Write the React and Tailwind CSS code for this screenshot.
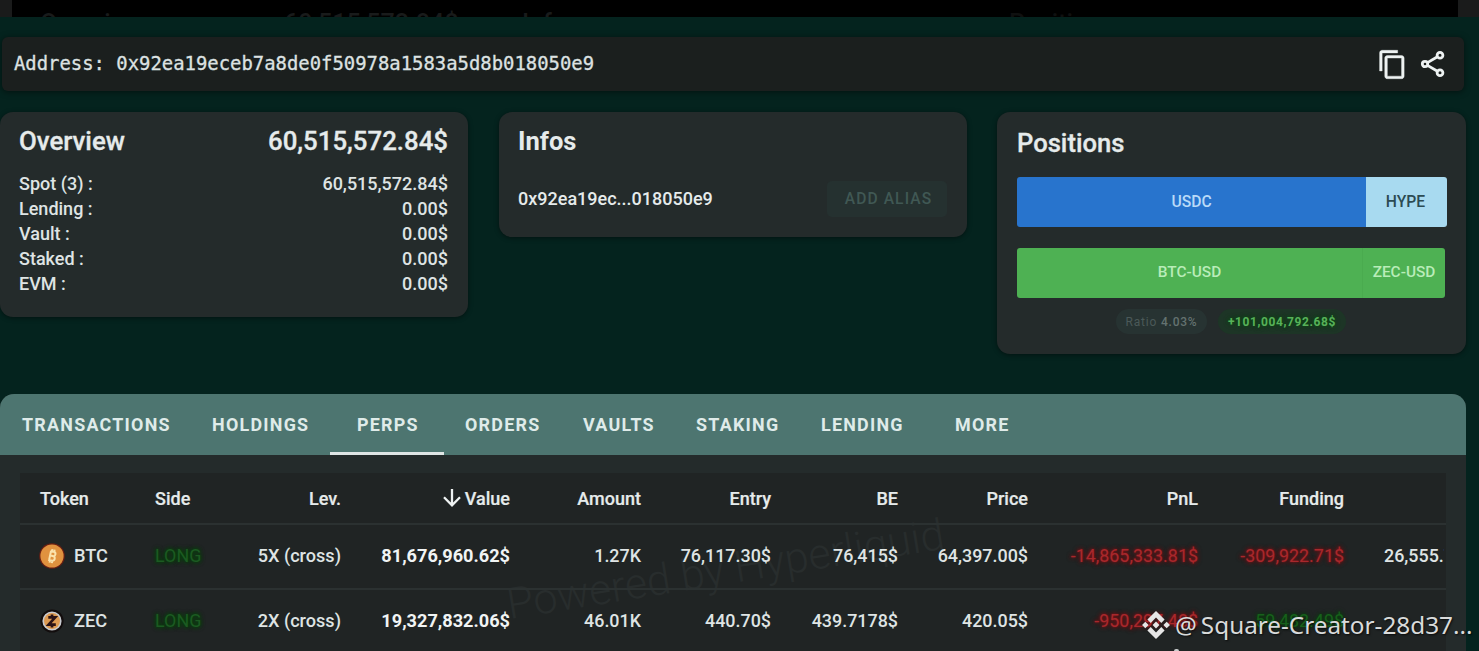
import React from 'react';

const ghostLabels = [
  { text: 'Overview', cls: 'left-[40px]' },
  { text: '60,515,572.84$', cls: 'left-[284px]' },
  { text: 'Infos', cls: 'left-[522px]' },
  { text: 'Positions', cls: 'left-[1009px] opacity-60' },
];

const overview = [
  ['Spot (3) :', '60,515,572.84$'],
  ['Lending :', '0.00$'],
  ['Vault :', '0.00$'],
  ['Staked :', '0.00$'],
  ['EVM :', '0.00$'],
];

const tabs = [
  { name: 'TRANSACTIONS', cls: 'w-[191px] pl-[22px]' },
  { name: 'HOLDINGS', cls: 'w-[139px] pl-[21px]' },
  { name: 'PERPS', cls: 'w-[114px] pl-[27px]', active: true },
  { name: 'ORDERS', cls: 'w-[118px] pl-[21px]' },
  { name: 'VAULTS', cls: 'w-[112px] pl-[21px]' },
  { name: 'STAKING', cls: 'w-[126px] pl-[22px]' },
  { name: 'LENDING', cls: 'w-[134px] pl-[21px]' },
  { name: 'MORE', cls: 'w-[110px] pl-[21px]' },
];

const ROW =
  'grid grid-cols-[135px_86px_100px_169px_131px_130px_127px_130px_170px_146px_102px] items-center whitespace-nowrap';

function CopyIcon() {
  return (
    <svg className="size-[31px]" viewBox="0 0 24 24" fill="#eef2f2" stroke="#eef2f2" strokeWidth="0.300">
      <path d="M16 1H4c-1.100 0-2 .9-2 2v14h2V3h12V1zm3 4H8c-1.100 0-2 .9-2 2v14c0 1.100.9 2 2 2h11c1.100 0 2-.9 2-2V7c0-1.100-.9-2-2-2zm0 16H8V7h11v14z" />
    </svg>
  );
}

function ShareIcon() {
  return (
    <svg className="h-[28px] w-[26px]" viewBox="0 0 26 28" fill="none" stroke="#eef2f2" strokeWidth="2.800">
      <path d="M7.500 12.600 17 7M7.500 15.400 17 21" />
      <circle cx="5" cy="14" r="2.700" />
      <circle cx="20" cy="5.300" r="2.900" />
      <circle cx="20" cy="22.700" r="2.900" />
    </svg>
  );
}

function BtcIcon() {
  return (
    <svg className="size-[26px]" viewBox="0 0 26 26">
      <circle cx="13" cy="13" r="12.800" fill="#6b1f12" />
      <circle cx="13" cy="13" r="11.600" fill="#e0923f" />
      <g transform="rotate(12 13 13)" fill="none" stroke="#fbe3ad" strokeWidth="2">
        <path d="M10.500 8.500h3.300a2.200 2.200 0 0 1 0 4.400h-2.300m0 0h2.800a2.400 2.400 0 0 1 0 4.700H10M11 8.500v9M12 6.200v2.500M14.300 6.200v2.500M12 17.500V20M14.300 17.500V20" />
      </g>
    </svg>
  );
}

function ZecIcon() {
  return (
    <svg className="size-[26px]" viewBox="0 0 26 26">
      <circle cx="13" cy="13" r="11.600" fill="#120d0d" />
      <circle cx="13" cy="13" r="8.800" fill="#dd9a52" stroke="#c9cbd0" strokeWidth="1.600" />
      <path d="M9.300 9.300h6.900l-6.600 7.400h7.200M13 6.500v2.500M13 17v2.500" fill="none" stroke="#2a1216" strokeWidth="2.700" />
    </svg>
  );
}

function SortIcon() {
  return (
    <svg className="h-[20px] w-[20px]" viewBox="0 0 20 20" fill="none" stroke="#eef2f2" strokeWidth="2.300">
      <path d="M10 1v16M2 9.300l8 8 8-8" />
    </svg>
  );
}

function DiamondLogo() {
  return (
    <svg className="size-[28px]" viewBox="0 0 28 28" fill="#e6e6e6">
      <path d="M14 0l8.600 8.600-3.300 3.300L14 6.600l-5.300 5.300-3.300-3.300zM14 28l8.600-8.600-3.300-3.300-5.300 5.300-5.300-5.300-3.300 3.300zM3.300 10.700l3.300 3.300-3.300 3.300L0 14zM24.700 10.700L28 14l-3.300 3.300-3.300-3.300zM14 10.600l3.400 3.400-3.400 3.400-3.400-3.400z" />
    </svg>
  );
}

function Card({ className, children }) {
  return (
    <section className={`rounded-[13px] bg-[#242b2b] shadow-[0_1px_5px_rgba(0,0,0,0.45)] ${className}`}>{children}</section>
  );
}

function Long() {
  return (
    <span className="font-normal text-[#1c5a22] [text-shadow:0_0_3px_#07400b,0_0_4px_#07400b,0_0_5px_#07400b]">LONG</span>
  );
}

function Loss({ children }) {
  return (
    <span className="text-right font-normal text-[#a8282c] [text-shadow:0_0_2px_#7c1418,0_0_4px_#6b1013,0_0_5px_#6b1013]">
      {children}
    </span>
  );
}

function Row({ icon, token, lev, value, amount, entry, be, price, pnl, funding, extra }) {
  return (
    <div className={`${ROW} h-[65px] border-b-2 border-[#2b3131] pb-px text-[17.900px] font-medium text-[#dfe4e4]`}>
      <span className="flex items-center gap-[9px] pl-[19px] text-[18.200px]">
        {icon}
        {token}
      </span>
      <Long />
      <span className="text-right text-[18.100px]">{lev}</span>
      <span className="text-right text-[18.150px] font-bold text-[#f1f4f4]">{value}</span>
      <span className="text-right">{amount}</span>
      <span className="text-right">{entry}</span>
      <span className="text-right">{be}</span>
      <span className="text-right">{price}</span>
      <Loss>{pnl}</Loss>
      {funding}
      <span className="mr-[2px] ml-[40px] overflow-hidden">{extra}</span>
    </div>
  );
}

export default function App() {
  return (
    <main className="relative flex h-[651px] w-[1479px] flex-col overflow-hidden bg-[#04231e] font-['Roboto',sans-serif] text-[#e6ebeb]">
      <div className="h-[17px] shrink-0 bg-[#1a1b1b] pr-[21px] pl-[12px]">
        <div className="h-full bg-black" />
        {ghostLabels.map((g) => (
          <div key={g.text} className={`absolute top-0 h-[17px] overflow-hidden pt-[9px] text-[25px] leading-[29px] font-medium text-[#191b1b] ${g.cls}`}>
            {g.text}
          </div>
        ))}
      </div>

      <header className="mt-[20px] mr-[15px] ml-[2px] flex h-[54px] shrink-0 items-center justify-between rounded-[6px] bg-[#1b1f1e] pr-[18px] pl-[12px] shadow-[0_1px_6px_rgba(0,0,0,0.5)]">
        <span className="pb-px font-['DejaVu_Sans_Mono',monospace] text-[18.900px] text-[#dde2e2] [-webkit-text-stroke:0.3px_#dde2e2]">
          Address: 0x92ea19eceb7a8de0f50978a1583a5d8b018050e9
        </span>
        <span className="flex items-center gap-[12px]">
          <CopyIcon />
          <ShareIcon />
        </span>
      </header>

      <div className="mt-[21px] flex h-[242px] shrink-0 items-start">
        <Card className="h-[205px] w-[468px] pt-[14px] pr-[20px] pl-[19px]">
          <div className="flex justify-between text-[25.800px] leading-[30px] font-medium [-webkit-text-stroke:0.3px_#e6ebeb]">
            <h2>Overview</h2>
            <span>60,515,572.84$</span>
          </div>
          <dl className="mt-[15px] text-[18px] font-medium text-[#dfe4e4]">
            {overview.map(([k, v]) => (
              <div key={k} className="flex h-[24.900px] items-center justify-between">
                <dt>{k}</dt>
                <dd>{v}</dd>
              </div>
            ))}
          </dl>
        </Card>

        <Card className="ml-[31px] h-[125px] w-[468px] pt-[14px] pr-[20px] pl-[19px]">
          <h2 className="text-[25.500px] leading-[30px] font-bold">Infos</h2>
          <div className="mt-[25px] flex items-center justify-between">
            <span className="pb-px text-[18px] font-medium">0x92ea19ec...018050e9</span>
            <button className="h-[36px] w-[120px] rounded-[5px] bg-[#253130] pt-[2px] pl-[3px] text-[15.600px] font-medium tracking-[1.100px] text-[#405854]">
              ADD ALIAS
            </button>
          </div>
        </Card>

        <Card className="ml-[30px] flex h-[242px] w-[469px] flex-col pt-[16px] pr-[19px] pl-[20px]">
          <h2 className="text-[25.600px] leading-[30px] font-medium [-webkit-text-stroke:0.3px_#e6ebeb]">Positions</h2>
          <div className="mt-[19px] flex h-[50px] overflow-hidden rounded-[3px] text-[15.700px] font-medium">
            <div className="flex w-[349px] items-center justify-center bg-[#2874cd] text-[#b9daf8]">USDC</div>
            <div className="flex flex-1 items-center justify-center bg-[#a8daf0] pr-[2px] text-[#2c4b53]">HYPE</div>
          </div>
          <div className="mt-[21px] flex h-[50px] w-[428px] overflow-hidden rounded-[3px] bg-[#4eb153] text-[15.400px] font-medium text-[#b9ecb9]">
            <div className="flex w-[346px] items-center justify-center border-r border-[#4aab4f]">BTC-USD</div>
            <div className="flex flex-1 items-center justify-center">ZEC-USD</div>
          </div>
          <div className="mt-[11px] ml-[99px] flex gap-[11px] text-[12px]">
            <span className="flex h-[25px] w-[91px] items-center justify-center rounded-full bg-[#273332] tracking-[0.8px] text-[#4b5958]">
              Ratio&nbsp;<b className="font-medium text-[#647270]">4.03%</b>
            </span>
            <span className="flex h-[25px] w-[128px] items-center justify-center rounded-full bg-[#1d3526] font-bold tracking-[0.6px] text-[#58b15a] [text-shadow:0_0_3px_#0b4a12,0_0_5px_#0b4a12]">
              +101,004,792.68$
            </span>
          </div>
        </Card>
      </div>

      <section className="mt-[40px] mr-[13px] h-[320px] shrink-0 overflow-hidden rounded-t-[14px] bg-[#242b2b]">
        <nav className="flex h-[61px] bg-[#4d7570]">
          {tabs.map((t) => (
            <div
              key={t.name}
              className={`flex items-center border-b-[3px] pt-[4px] text-[17.900px] font-bold tracking-[1.250px] text-[#dfebe9] ${t.cls} ${t.active ? 'border-[#dfe5e5]' : 'border-transparent'}`}
            >
              {t.name}
            </div>
          ))}
        </nav>
        <div className="relative mt-[18px] mr-[20px] ml-[20px] overflow-hidden bg-[#202424]">
          <div className="absolute top-[107px] left-[491px] origin-bottom-left -rotate-[9.2deg] text-[43px] leading-[48px] font-light whitespace-nowrap text-[#282d2d]">
            Powered by Hyperliquid
          </div>
          <div className="relative">
            <div className={`${ROW} h-[52px] border-b-2 border-[#2b3131] text-right text-[18px] font-medium [-webkit-text-stroke:0.2px_#e6ebeb]`}>
              <span className="pl-[20px] text-left">Token</span>
              <span className="text-left">Side</span>
              <span>Lev.</span>
              <span className="flex items-center justify-end gap-[3px]">
                <SortIcon />
                Value
              </span>
              <span>Amount</span>
              <span>Entry</span>
              <span>BE</span>
              <span>Price</span>
              <span>PnL</span>
              <span>Funding</span>
            </div>
            <Row
              icon={<BtcIcon />}
              token="BTC"
              lev="5X (cross)"
              value="81,676,960.62$"
              amount="1.27K"
              entry="76,117.30$"
              be="76,415$"
              price="64,397.00$"
              pnl="-14,865,333.81$"
              funding={<Loss>-309,922.71$</Loss>}
              extra="26,555.74$"
            />
            <Row
              icon={<ZecIcon />}
              token="ZEC"
              lev="2X (cross)"
              value="19,327,832.06$"
              amount="46.01K"
              entry="440.70$"
              be="439.7178$"
              price="420.05$"
              pnl="-950,297.48$"
              funding={
                <span className="text-right font-normal text-[#17601b] [text-shadow:0_0_3px_#07400b,0_0_5px_#07400b]">
                  59,482.49$
                </span>
              }
            />
          </div>
        </div>
      </section>

      <div className="absolute top-[609px] left-[1142px] flex items-center whitespace-nowrap">
        <DiamondLogo />
        <span className="ml-[5px] font-['Noto_Sans',sans-serif] text-[24.300px] leading-[32px] text-[#d9dbdb] [text-shadow:1px_1px_2px_rgba(0,0,0,0.7)]">
          @<span className="ml-[4px]">Square-Creator-28d37...</span>
        </span>
      </div>
      <div className="absolute top-[649px] left-[1174px] h-[4px] w-[5px] rounded-full bg-[#c8cccc]" />
    </main>
  );
}
